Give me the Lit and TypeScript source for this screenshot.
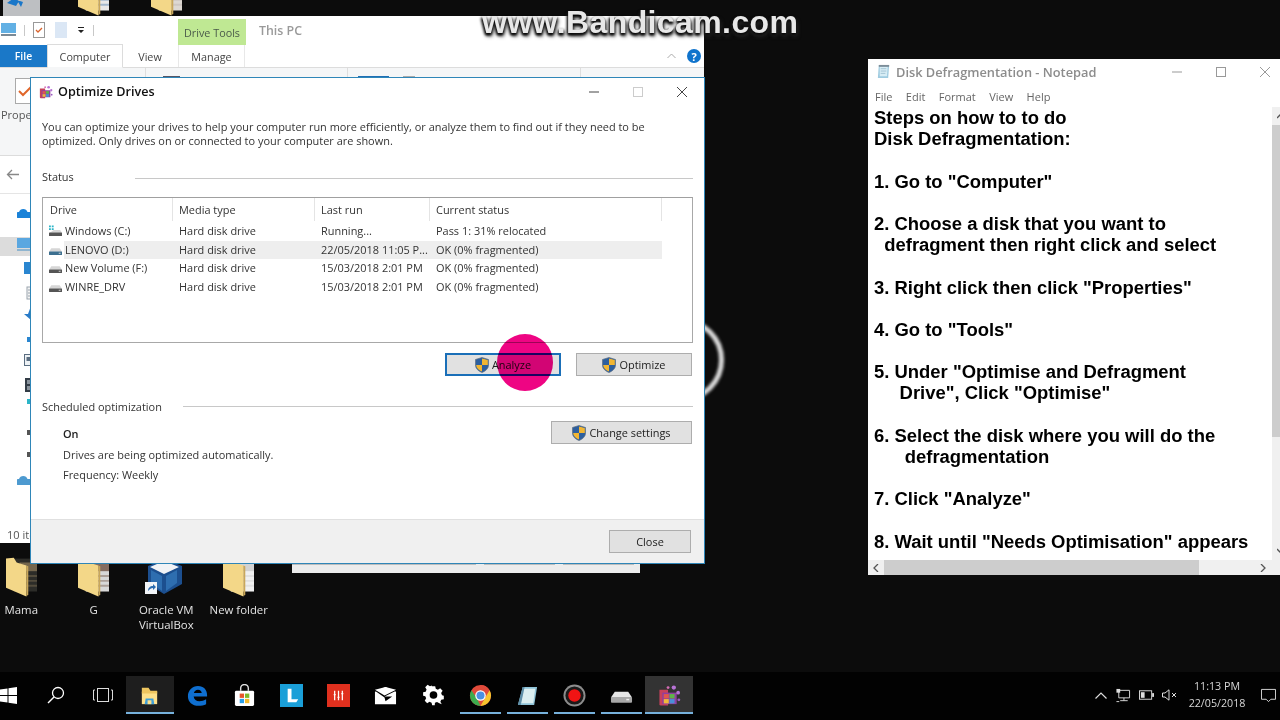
import { LitElement, html, css } from "lit";
import { customElement } from "lit/decorators.js";

const shield = html`<svg class="shield" viewBox="0 0 14 16"><path d="M7 .5 13.5 2.5V8c0 3.6-2.8 6-6.5 7.5C3.300 14 .5 11.600.5 8V2.500z" fill="#2d5f9e"/><path d="M7 1.500V8h5.800V3z" fill="#f2b632"/><path d="M7 8v6.500C4 13.200 1.200 11.200 1.200 8z" fill="#f2b632"/><path d="M7 .5 13.500 2.500V8c0 3.600-2.800 6-6.500 7.500C3.300 14 .5 11.600.5 8V2.500z" fill="none" stroke="#5f6f80" stroke-width=".7"/></svg>`;

const drive = (accent = "#555") => html`<svg class="drive" viewBox="0 0 14 12"><path d="M2.500 4h9L14 8H0z" fill="#d6d6d6"/><rect x="0" y="7.500" width="14" height="4" rx=".6" fill="${accent}"/><rect x="10.500" y="9" width="2" height="1" fill="#ddd"/></svg>`;

const sysDrive = html`<svg class="drive" viewBox="0 0 14 12"><path d="M0 0h2v2H0zM3 0h2v2H3zM0 3h2v2H0zM3 3h2v2H3z" fill="#2bb5c8"/><path d="M5 5h7l2 3H1z" fill="#d6d6d6"/><rect x="0" y="7.500" width="14" height="4" rx=".6" fill="#555"/></svg>`;

const defragIcon = html`<svg viewBox="0 0 16 16" width="100%" height="100%"><path d="M1 4h6v11H2a1 1 0 0 1-1-1z" fill="#c7415c"/><rect x="3" y="6" width="10" height="8" fill="#8f3fa0"/><rect x="4" y="7" width="3.500" height="3" fill="#e2574c"/><rect x="8" y="7" width="3.500" height="3" fill="#5fb548"/><rect x="4" y="10.500" width="3.500" height="3" fill="#f0b93a"/><rect x="8" y="10.500" width="3.500" height="3" fill="#4a8fd8"/><circle cx="11" cy="2.500" r="1.500" fill="#b873d6"/><circle cx="14" cy="6" r="1.300" fill="#b873d6"/><circle cx="14.500" cy="11" r="1" fill="#9a5cc0"/><circle cx="7" cy="2.500" r="1" fill="#d56cb4"/></svg>`;

const notepadIcon = html`<svg viewBox="0 0 16 16" width="100%" height="100%"><path d="M3 1h11l-1 14H2z" fill="#9fcbe0"/><path d="M4 3h8.500l-.8 10H4z" fill="#d8edf5"/><path d="M3 1h11v2H3z" fill="#7d8d98"/><path d="M5 5h6M5 7.500h6M5 10h5" stroke="#8ab0c4" stroke-width=".7"/></svg>`;

const folder = (paper: string, detail: string) => html`<svg class="folder" viewBox="0 0 32 40"><path d="M8 1h24v34H8z" fill="${paper}"/><path d="M14 5h18v9H14z" fill="${detail}" opacity=".75"/><path d="M18 18h14v2H18zM18 23h14v2H18zM19 28h13v2H19z" fill="${detail}" opacity=".4"/><path d="M0 1 8 0l3 5 10 3v32L0 31z" fill="#f3d788"/><path d="M21 8v32l2-2V9z" fill="#c9a75a"/></svg>`;

const vbox = html`<svg class="folder vb" viewBox="0 0 38 36"><path d="M19 0 37 7v18L19 35 3 25V7z" fill="#1c4f8f"/><path d="M19 2 34 8 19 15 5 8z" fill="#f1f3f6"/><path d="M6 11 17 17v15L6 24z" fill="#2e6eb0"/><path d="M32 11 21 17v15l11-8z" fill="#2e6eb0"/><rect x="0" y="23" width="12" height="12" fill="#f2f5f8"/><path d="M3 32c0-3 2-5 5-5v-2l3 3-3 3v-2c-2 0-3 1-5 3z" fill="#2b6cb0"/></svg>`;

const close = html`<svg class="cap" viewBox="0 0 10 10"><path d="M0 0 10 10M10 0 0 10" stroke="currentColor" fill="none" stroke-width="1"/></svg>`;
const minimize = html`<svg class="cap" viewBox="0 0 10 10"><path d="M0 5h10" stroke="currentColor" stroke-width="1"/></svg>`;
const maximize = html`<svg class="cap" viewBox="0 0 10 10"><rect x=".5" y=".5" width="9" height="9" fill="none" stroke="currentColor"/></svg>`;

const driveRows = [
  { icon: sysDrive, name: "Windows (C:)", run: "Running...", status: "Pass 1: 31% relocated", on: false },
  { icon: drive("#3c6f8f"), name: "LENOVO (D:)", run: "22/05/2018 11:05 P...", status: "OK (0% fragmented)", on: true },
  { icon: drive(), name: "New Volume (F:)", run: "15/03/2018 2:01 PM", status: "OK (0% fragmented)", on: false },
  { icon: drive(), name: "WINRE_DRV", run: "15/03/2018 2:01 PM", status: "OK (0% fragmented)", on: false },
];

const steps = [
  "Steps on how to to do",
  "Disk Defragmentation:",
  "",
  '1. Go to "Computer"',
  "",
  "2. Choose a disk that you want to",
  "  defragment then right click and select",
  "",
  '3. Right click then click "Properties"',
  "",
  '4. Go to "Tools"',
  "",
  '5. Under "Optimise and Defragment',
  '     Drive", Click "Optimise"',
  "",
  "6. Select the disk where you will do the",
  "      defragmentation",
  "",
  '7. Click "Analyze"',
  "",
  '8. Wait until "Needs Optimisation" appears',
];

/* nav pane slivers visible left of the dialog: row height, then the icon's colour */
const navRows = [
  { h: 17, c: "#1a82d8", k: "cloud" },
  { h: 31, c: "#5aa7e0", k: "pc" },
  { h: 23, c: "#2a86d0", k: "box" },
  { h: 25, c: "#9aa4ad", k: "doc" },
  { h: 20, c: "#2a7cc8", k: "arrow" },
  { h: 25, c: "#2a86d0", k: "dot" },
  { h: 22, c: "#5a6d80", k: "image" },
  { h: 25, c: "#333c46", k: "film" },
  { h: 15, c: "#2bb5c8", k: "dot" },
  { h: 31, c: "#555", k: "dot" },
  { h: 22, c: "#555", k: "dot" },
  { h: 28, c: "#4d9ad0", k: "cloud" },
];

const taskIcons = [
  html`<svg class="ti" viewBox="0 0 24 24"><path d="M4 8h16v13H4z" fill="#fde08a"/><path d="M4 4h7l2 3h7v3H4z" fill="#eec55f"/><path d="M8 15h8l1 6H7z" fill="#3f9fd8"/><rect x="10" y="17" width="4" height="4" fill="#fde08a"/></svg>`,
  html`<svg class="ti" viewBox="0 0 24 24"><path d="M22 13H8c.3 3.300 2.800 5 6 5 2.600 0 5-.7 7-2v5c-2.300 1.200-5 1.700-8 1.700-6.500 0-11-4-11-10C2 6.500 6.500 2 12.500 2 18.500 2 22 6 22 11.500zM8.200 9.500h8.200C16.300 7.500 14.800 6 12.500 6 10.300 6 8.700 7.500 8.200 9.500z" fill="#0f6fd0"/></svg>`,
  html`<svg class="ti" viewBox="0 0 24 24"><path d="M8 7V4.500a4 4 0 0 1 8 0V7" fill="none" stroke="#ddd" stroke-width="1.500"/><rect x="2" y="7" width="20" height="16" rx="1.500" fill="#fff"/><rect x="7" y="10" width="4.500" height="4.500" fill="#e8562a"/><rect x="12.500" y="10" width="4.500" height="4.500" fill="#7fba2a"/><rect x="7" y="15.500" width="4.500" height="4.500" fill="#2a9ee8"/><rect x="12.500" y="15.500" width="4.500" height="4.500" fill="#f5b92a"/></svg>`,
  html`<svg class="ti" viewBox="0 0 24 24"><rect width="24" height="24" fill="#1a9fd8"/><path d="M8 5h4v11h7l-2 3H8z" fill="#fff"/></svg>`,
  html`<svg class="ti" viewBox="0 0 24 24"><rect width="24" height="24" fill="#e0301e"/><path d="M8 7v10M12 7v10M16 7v10" stroke="#fff" stroke-width="1.300"/><path d="M7 11h2M11 14h2M15 10h2" stroke="#fff" stroke-width="1.300"/></svg>`,
  html`<svg class="ti" viewBox="0 0 24 24"><path d="M1 8 12 3l11 5v13H1z" fill="#fff"/><path d="M1 7h22l-12 6 8 0-7 5-1-4z" fill="#000" /><path d="M1 6 12 3l11 3-12 6z" fill="#fff"/></svg>`,
  html`<svg class="ti" viewBox="0 0 24 24"><path d="M10 2h4l.7 3 2.400 1 2.700-1.600 2.800 2.800L20.900 9.900l1 2.400 2.100.700v4l-3 .7-1 2.400 1.600 2.700-2.800-1-2.700-1.600-2.400 1L13.500 24h-3l-.7-3-2.400-1-2.700 1.600-2.800-2.800L3.500 16l-1-2.400L0 13V9l3-.7 1-2.400-1.600-2.700 2.800-2.800L7.900 2l2.400-1z" transform="scale(.9) translate(1.300 .6)" fill="#fff"/><circle cx="12" cy="11.500" r="4" fill="#000"/></svg>`,
  html`<svg class="ti" viewBox="0 0 24 24"><circle cx="12" cy="12" r="11" fill="#e04a3a"/><path d="M12 1a11 11 0 0 1 9.500 5.500H12z" fill="#e04a3a"/><path d="M21.500 6.500A11 11 0 0 1 12 23l5-9z" fill="#f7c52e"/><path d="M12 23A11 11 0 0 1 2.500 6.500l5.500 8z" fill="#3cab4e"/><circle cx="12" cy="12" r="5.500" fill="#fff"/><circle cx="12" cy="12" r="4.200" fill="#4a90e2"/></svg>`,
  html`<svg class="ti" viewBox="0 0 24 24"><path d="M7 3h15l-3 19H2z" fill="#8fc3d8"/><path d="M8 5h12l-2 15H5z" fill="#dbeef0"/><path d="M2 22 7 3l2 0-4 19z" fill="#5f8fa8"/></svg>`,
  html`<svg class="ti" viewBox="0 0 24 24"><circle cx="12" cy="12" r="11.500" fill="#8d8d8d"/><circle cx="12" cy="12" r="9.500" fill="#1a1a1a"/><circle cx="12" cy="12" r="6.500" fill="#f01414"/></svg>`,
  html`<svg class="ti" viewBox="0 0 24 24"><path d="M5 8h14l4 6H1z" fill="#e6e6e6"/><rect x="1" y="13.500" width="22" height="6" rx="1" fill="#a8a8a8"/><rect x="17" y="15.500" width="3" height="1.500" fill="#eee"/></svg>`,
  html`<span class="ti">${defragIcon}</span>`,
];

@customElement("app-root")
export class AppRoot extends LitElement {
  static styles = css`
    :host { display: block; width: 1280px; height: 720px; overflow: hidden; font-family: "Open Sans", "Noto Sans", sans-serif; }
    .screen { position: relative; width: 1280px; height: 720px; background: #0c0c0c; overflow: hidden; display: flex; flex-direction: column; }
    .desktop { position: relative; flex: 1; }

    .icons { position: absolute; left: -15px; display: flex; }
    .icons.top { top: -27px; }
    .icons.bottom { top: 554px; }
    .dicon { width: 72.500px; display: flex; flex-direction: column; align-items: center; color: #e4e4e4; font-size: 11.400px; line-height: 15px; text-align: center; }
    .folder { width: 31px; height: 40px; display: block; margin-top: 3px; margin-bottom: 5px; }
    .folder.vb { width: 38px; margin-left: -5px; }
    .binwrap { width: 37px; height: 40px; margin-top: 3px; margin-bottom: 5px; }

    .ring { position: absolute; left: 640px; top: 318px; width: 84px; height: 84px; box-sizing: border-box; border-radius: 50%; border: 5px solid #dcdcdc; filter: blur(1.500px); }

    /* explorer */
    .explorer { position: absolute; left: 0; top: 16px; width: 704px; height: 527px; background: #fff; display: flex; flex-direction: column; color: #333; font-size: 10.800px; }
    .qat { height: 29px; display: flex; align-items: flex-start; }
    .qat-left { display: flex; align-items: center; gap: 8px; height: 28px; width: 178px; padding-left: 1px; box-sizing: border-box; }
    .sep { width: 1px; height: 11px; background: #c8c8c8; }
    .drive-tools { width: 68px; height: 26px; margin-top: 3px; background: #bfe893; color: #4a5a4a; display: flex; align-items: center; justify-content: center; font-size: 10.800px; }
    .this-pc { margin-left: 13px; margin-top: 6px; color: #9a9a9a; font-weight: 600; font-size: 12.400px; }
    .tabs { height: 22px; display: flex; align-items: stretch; background: #fff; border-bottom: 1px solid #dcdcdc; position: relative; }
    .tab { display: flex; align-items: center; justify-content: center; color: #444; }
    .tab.file { width: 47px; background: #1a78c8; color: #fff; font-weight: 600; font-size: 10.400px; }
    .tab.cur { width: 76px; border: 1px solid #dcdcdc; border-bottom-color: #f5f6f7; margin-top: -1px; height: 24px; box-sizing: border-box; }
    .tab.view { width: 54px; }
    .tab.manage { width: 67px; margin-left: 1px; border-left: 1px solid #e8e8e8; border-right: 1px solid #e8e8e8; box-sizing: border-box; }
    .tabs-end { margin-left: auto; display: flex; align-items: center; gap: 11px; padding-right: 3px; }
    .help { width: 14px; height: 14px; border-radius: 50%; background: #0f73cc; color: #fff; font-size: 11px; font-weight: 700; display: flex; align-items: center; justify-content: center; }
    .ribbon { position: relative; height: 88px; background: #f5f6f7; border-bottom: 1px solid #dcdcdc; padding: 10px 0 0 15px; box-sizing: border-box; flex: none; }
    .ribsep { position: absolute; top: 0; height: 10px; width: 1px; background: #dedede; }
    .ribpeek { position: absolute; top: 8px; height: 2px; }
    .prop-box { width: 20px; height: 26px; border: 1px solid #aaa; background: #fff; box-sizing: border-box; display: flex; align-items: center; justify-content: center; }
    .prop-label { margin: 4px 0 0 -14px; line-height: 14px; color: #555; font-size: 11px; }
    .addr { height: 37px; border-bottom: 1px solid #e5e5e5; padding-left: 6px; display: flex; align-items: center; flex: none; }
    .nav { flex: 1; padding-top: 10px; padding-left: 17px; position: relative; }
    .navhl { position: absolute; left: 0; top: 43px; width: 30px; height: 19px; background: #dcdcdc; }
    .navrow { position: relative; display: flex; align-items: flex-end; }
    .navico { width: 14px; height: 14px; display: block; }
    .status { height: 18px; padding-left: 7px; display: flex; align-items: center; color: #555; flex: none; font-size: 11px; }

    .behind { position: absolute; left: 292px; top: 563px; width: 348px; height: 10px; background: #ececec; display: flex; gap: 8px; padding-right: 6px; box-sizing: border-box; }
    .behind i { display: block; width: 71px; height: 2px; background: #bdbdbd; }
    .behind i:first-child { flex: 1; }

    /* dialog */
    .dialog { position: absolute; left: 30px; top: 77px; width: 675px; height: 487px; box-sizing: border-box; background: #fff; border: 1px solid #2f86b8; display: flex; flex-direction: column; color: #333; font-size: 10.950px; line-height: 14px; }
    .dtitle { height: 27px; display: flex; align-items: center; padding-left: 8px; color: #111; flex: none; }
    .dtitle .ico { width: 14px; height: 14px; margin-right: 5px; }
    .dtitle b { font-size: 12.600px; font-weight: 600; }
    .dcaps { margin-left: auto; display: flex; align-items: center; color: #444; }
    .dcaps span { width: 44px; display: flex; justify-content: center; }
    .dcaps span.dim { color: #ccc; }
    .cap { width: 10px; height: 10px; display: block; }
    .dbody { padding: 0 11px; flex: 1; display: flex; flex-direction: column; }
    .desc { margin: 15px 0 0; }
    .legend { display: flex; align-items: center; height: 16px; white-space: nowrap; }
    .legend::after { content: ""; flex: 1; height: 1px; background: #c8c8c8; }
    .legend.status-l { margin-top: 21px; gap: 61px; }
    .legend.status-l::after { margin-top: 3px; }
    .legend.sched { margin-top: 23px; gap: 21px; }
    .legend.sched::after { margin-top: -2px; }
    .list { margin-top: 12px; height: 146px; box-sizing: border-box; border: 1px solid #a8a8a8; border-top-color: #a0a0a0; padding-left: 7px; flex: none; }
    .grow { display: grid; grid-template-columns: 129px 142px 115px 232px; align-items: center; }
    .ghead { height: 23px; }
    .ghead span { position: relative; height: 23px; display: flex; align-items: center; }
    .ghead span::after { content: ""; position: absolute; right: 6px; top: 0; bottom: 0; width: 1px; background: #e4e4e4; }
    .grows { margin-top: 1px; }
    .grow.row { height: 18.500px; margin-left: 14px; grid-template-columns: 115px 142px 115px 226px; width: 598px; }
    .grow.row.on { background: #eeeeee; }
    .cellname { display: flex; align-items: center; gap: 3px; margin-left: -15px; }
    .drive { width: 13px; height: 12px; flex: none; }
    .actions { display: flex; justify-content: flex-end; gap: 15px; margin-top: 10px; padding-right: 1px; }
    .btn { height: 23px; box-sizing: border-box; background: #e1e1e1; border: 1px solid #adadad; color: #222; display: flex; align-items: center; justify-content: center; gap: 3px; }
    .btn.b116 { width: 116px; }
    .btn.focus { border: 2px solid #1a6fb8; }
    .btn.cs { width: 141px; margin-top: -1px; }
    .btn.close { width: 82px; }
    .shield { width: 14px; height: 16px; display: block; }
    .schedrow { display: flex; justify-content: space-between; margin-top: 7px; padding-right: 1px; }
    .schedinfo { padding: 5px 0 0 21px; display: flex; flex-direction: column; gap: 6.500px; }
    .schedinfo b { font-weight: 600; color: #222; }
    .dfoot { height: 44px; flex: none; background: #f0f0f0; border-top: 1px solid #e0e0e0; box-sizing: border-box; display: flex; align-items: center; justify-content: flex-end; padding-right: 13px; }

    /* pink click marker */
    .click { position: absolute; left: 497px; top: 334px; width: 56px; height: 57px; border-radius: 50%; background: #ee0583; mix-blend-mode: multiply; }

    /* notepad */
    .notepad { position: absolute; left: 868px; top: 59px; width: 421px; height: 516px; background: #fff; display: flex; flex-direction: column; color: #000; }
    .ntitle { height: 27px; box-sizing: border-box; padding: 0 0 2px 8px; display: flex; align-items: center; color: #8c8c8c; font-size: 12.800px; font-weight: 600; flex: none; }
    .ntitle .ico { width: 15px; height: 15px; margin-right: 5px; }
    .ncaps { margin-left: auto; display: flex; color: #999; padding-right: 2px; }
    .ncaps span { width: 44px; display: flex; justify-content: center; }
    .nmenu { height: 21px; display: flex; align-items: center; gap: 13.400px; padding-left: 7px; color: #666; font-size: 11px; flex: none; }
    .nbody { flex: 1; display: flex; min-height: 0; }
    .ntext { flex: 1; padding-left: 6px; font-family: "Liberation Sans", Arial, sans-serif; font-weight: 700; font-size: 18.450px; line-height: 21.200px; white-space: pre; overflow: hidden; }
    .ntext div { height: 21.200px; }
    .vbar { width: 17px; background: #f0f0f0; display: flex; flex-direction: column; flex: none; }
    .varrow { height: 18px; display: flex; align-items: center; justify-content: center; flex: none; }
    .vthumb { height: 312px; background: #cdcdcd; flex: none; }
    .vrest { flex: 1; }
    .hbar { height: 15px; display: flex; background: #f0f0f0; flex: none; }
    .harrow { width: 16px; display: flex; align-items: center; justify-content: center; }
    .hthumb { width: 315px; background: #cdcdcd; }
    .hrest { width: 56px; }
    .arrowsvg { width: 8px; height: 8px; display: block; }

    .mark { position: absolute; left: 482px; top: 2px; font-family: "Liberation Sans", Arial, sans-serif; font-weight: 700; font-size: 32px; line-height: 40px; letter-spacing: .4px; white-space: nowrap; color: #e8e8e8; text-shadow: 0 2px 3px #000, 1px 3px 4px #333, -1px 2px 3px #222; }

    /* taskbar */
    .taskbar { height: 48px; background: #020202; display: flex; align-items: flex-start; padding-top: 4px; box-sizing: border-box; color: #ddd; flex: none; }
    .tb { width: 47.200px; height: 38px; display: flex; align-items: center; justify-content: center; position: relative; flex: none; }
    .tb.start { width: 32px; justify-content: flex-start; }
    .tb.search { width: 47px; }
    .tb.view { width: 47.400px; }
    .tb.active { background: #1e1e1e; }
    .tb.focus { background: #333; }
    .tb.run::after { content: ""; position: absolute; left: 3px; right: 3px; bottom: 0; height: 2px; background: #76b1dc; }
    .tb.active::after, .tb.focus::after { left: 0; right: 0; }
    .ti { width: 23px; height: 23px; display: block; }
    .tray { margin-left: auto; display: flex; align-items: center; height: 38px; }
    .tray svg { display: block; }
    .tray .t { margin-left: 8px; width: 14px; height: 14px; }
    .clock { width: 74px; margin-left: 3px; text-align: center; font-size: 10.700px; line-height: 17px; color: #d8d8d8; }
    .bell { width: 15px; height: 15px; margin: 0 4px 0 7px; }
  `;

  navIcon(r: { c: string; k: string }) {
    if (r.k === "cloud") return html`<svg class="navico" viewBox="0 0 14 14"><path d="M1 11a3 3 0 0 1 1-6 4.500 4.500 0 0 1 8.500 0H14v6z" fill="${r.c}"/></svg>`;
    if (r.k === "pc") return html`<svg class="navico" viewBox="0 0 14 14"><rect width="14" height="10" fill="${r.c}"/><rect y="11" width="14" height="2" fill="#8fb5d0"/></svg>`;
    if (r.k === "box") return html`<svg class="navico" viewBox="0 0 14 14"><path d="M7 1h7v12H7z" fill="${r.c}"/></svg>`;
    if (r.k === "dot") return html`<svg class="navico" viewBox="0 0 14 14"><rect x="10" y="6" width="4" height="5" fill="${r.c}"/></svg>`;
    if (r.k === "arrow") return html`<svg class="navico" viewBox="0 0 14 14"><path d="M14 0v14L7 8h4z" fill="${r.c}"/></svg>`;
    if (r.k === "image") return html`<svg class="navico" viewBox="0 0 14 14"><rect x="7.500" y="1.500" width="6.500" height="11" fill="#eef2f5" stroke="${r.c}"/><rect x="9.500" y="4" width="4.500" height="4" fill="${r.c}"/></svg>`;
    if (r.k === "film") return html`<svg class="navico" viewBox="0 0 14 14"><rect x="8" y="0" width="6" height="14" fill="${r.c}"/><rect x="10" y="2" width="4" height="4" fill="#8a939c"/><rect x="10" y="8" width="4" height="4" fill="#8a939c"/></svg>`;
    return html`<svg class="navico" viewBox="0 0 14 14"><rect x="10" y="1" width="4" height="12" fill="#f4f4f4" stroke="${r.c}"/><path d="M11 4h3M11 7h3M11 10h3" stroke="${r.c}"/></svg>`;
  }

  render() {
    return html`<div class="screen">
      <div class="desktop">
        <div class="icons top">
          <div class="dicon"><div class="binwrap"><svg width="37" height="40" viewBox="0 0 37 40"><path d="M0 0h37v40H0z" fill="#bdbfc2"/><path d="M4 27l7-5 5 3-3 5zM14 24l6 2-2 5z" fill="#1a77c9"/></svg></div></div>
          <div class="dicon">${folder("#e8e8e8", "#3a6ea5")}</div>
          <div class="dicon">${folder("#ddd8d2", "#b8b0aa")}</div>
        </div>
        <div class="icons bottom">
          <div class="dicon">${folder("#2c2c28", "#8c7a58")}<span>Mama</span></div>
          <div class="dicon">${folder("#d8d8d8", "#6a4a3a")}<span>G</span></div>
          <div class="dicon">${vbox}<span>Oracle VM<br />VirtualBox</span></div>
          <div class="dicon">${folder("#f0f0f0", "#c8c8c8")}<span>New folder</span></div>
        </div>

        <div class="ring"></div>

        <div class="behind"><i></i><i></i><i></i></div>

        <section class="explorer">
          <div class="qat">
            <div class="qat-left">
              <svg width="15" height="14" viewBox="0 0 15 14"><rect width="15" height="10" fill="#62b0e4"/><rect y="11" width="15" height="2" fill="#7a8a96"/></svg>
              <span class="sep"></span>
              <svg width="12" height="16" viewBox="0 0 12 16"><rect x=".5" y=".5" width="11" height="15" fill="#fff" stroke="#999"/><path d="M3 8l2 2 4-4" fill="none" stroke="#d9622b" stroke-width="1.300"/></svg>
              <svg width="12" height="16" viewBox="0 0 12 16" style="margin-left:2px"><rect width="12" height="16" fill="#dbe7f5"/></svg>
              <svg width="8" height="8" viewBox="0 0 8 8" style="margin-left:2px"><path d="M1 1h6v1H1zM1 4h6L4 7z" fill="#222"/></svg>
              <span class="sep"></span>
            </div>
            <div class="drive-tools">Drive Tools</div>
            <div class="this-pc">This PC</div>
          </div>
          <div class="tabs">
            <div class="tab file">File</div>
            <div class="tab cur">Computer</div>
            <div class="tab view">View</div>
            <div class="tab manage">Manage</div>
            <div class="tabs-end">
              <svg width="9" height="6" viewBox="0 0 9 6"><path d="M.5 5 4.500 1l4 4" fill="none" stroke="#aaa"/></svg>
              <span class="help">?</span>
            </div>
          </div>
          <div class="ribbon">
            <span class="ribsep" style="left:145px"></span>
            <span class="ribsep" style="left:347px"></span>
            <span class="ribsep" style="left:580px"></span>
            <span class="ribpeek" style="left:163px;width:17px;background:#556"></span>
            <span class="ribpeek" style="left:358px;width:31px;background:#1f6fb5"></span>
            <span class="ribpeek" style="left:403px;width:12px;background:#aaa"></span>
            <div class="prop-box"><svg width="14" height="12" viewBox="0 0 14 12"><path d="M1 6l4 4 8-8" fill="none" stroke="#e0662a" stroke-width="2"/></svg></div>
            <div class="prop-label">Prope</div>
          </div>
          <div class="addr">
            <svg width="13" height="11" viewBox="0 0 13 11"><path d="M13 5.500H2M6 1 1.500 5.500 6 10" fill="none" stroke="#888" stroke-width="1.300"/></svg>
          </div>
          <div class="nav">
            <div class="navhl"></div>
            ${navRows.map((r) => html`<div class="navrow" style="height:${r.h}px">${this.navIcon(r)}</div>`)}
          </div>
          <div class="status">10 items</div>
        </section>

        <section class="dialog">
          <div class="dtitle">
            <span class="ico">${defragIcon}</span>
            <b>Optimize Drives</b>
            <div class="dcaps">
              <span>${minimize}</span>
              <span class="dim">${maximize}</span>
              <span>${close}</span>
            </div>
          </div>
          <div class="dbody">
            <p class="desc">You can optimize your drives to help your computer run more efficiently, or analyze them to find out if they need to be<br />optimized. Only drives on or connected to your computer are shown.</p>
            <div class="legend status-l">Status</div>
            <div class="list">
              <div class="grow ghead">
                <span>Drive</span><span>Media type</span><span>Last run</span><span>Current status</span>
              </div>
              <div class="grows">
                ${driveRows.map((d) => html`<div class="grow row ${d.on ? "on" : ""}">
                  <div class="cellname">${d.icon}<span>${d.name}</span></div>
                  <div>Hard disk drive</div>
                  <div>${d.run}</div>
                  <div>${d.status}</div>
                </div>`)}
              </div>
            </div>
            <div class="actions">
              <div class="btn b116 focus">${shield}<span>Analyze</span></div>
              <div class="btn b116">${shield}<span>Optimize</span></div>
            </div>
            <div class="legend sched">Scheduled optimization</div>
            <div class="schedrow">
              <div class="schedinfo">
                <b>On</b>
                <span>Drives are being optimized automatically.</span>
                <span>Frequency: Weekly</span>
              </div>
              <div class="btn cs">${shield}<span>Change settings</span></div>
            </div>
          </div>
          <div class="dfoot"><div class="btn close">Close</div></div>
        </section>

        <div class="click"></div>

        <section class="notepad">
          <div class="ntitle">
            <span class="ico">${notepadIcon}</span>
            Disk Defragmentation - Notepad
            <div class="ncaps">
              <span>${minimize}</span><span>${maximize}</span><span>${close}</span>
            </div>
          </div>
          <div class="nmenu"><span>File</span><span>Edit</span><span>Format</span><span>View</span><span>Help</span></div>
          <div class="nbody">
            <div class="ntext">${steps.map((s) => html`<div>${s}</div>`)}</div>
            <div class="vbar">
              <div class="varrow"><svg class="arrowsvg" viewBox="0 0 8 8"><path d="M0 6 4 2l4 4" fill="none" stroke="#555" stroke-width="1.300"/></svg></div>
              <div class="vthumb"></div>
              <div class="vrest"></div>
              <div class="varrow"><svg class="arrowsvg" viewBox="0 0 8 8"><path d="M0 2l4 4 4-4" fill="none" stroke="#555" stroke-width="1.300"/></svg></div>
            </div>
          </div>
          <div class="hbar">
            <div class="harrow"><svg class="arrowsvg" viewBox="0 0 8 8"><path d="M6 0 2 4l4 4" fill="none" stroke="#555" stroke-width="1.300"/></svg></div>
            <div class="hthumb"></div>
            <div class="hrest"></div>
            <div class="harrow"><svg class="arrowsvg" viewBox="0 0 8 8"><path d="M2 0l4 4-4 4" fill="none" stroke="#555" stroke-width="1.300"/></svg></div>
          </div>
        </section>

        <div class="mark">www.Bandicam.com</div>
      </div>

      <footer class="taskbar">
        <div class="tb start"><svg width="17" height="17" viewBox="0 0 17 17"><path d="M0 2.500 7.500 1.400V8H0zM8.500 1.300 17 0v8H8.500zM0 9h7.500v6.600L0 14.500zM8.500 9H17v8l-8.500-1.300z" fill="#fff"/></svg></div>
        <div class="tb search"><svg width="18" height="18" viewBox="0 0 18 18"><circle cx="11" cy="7" r="5.500" fill="none" stroke="#fff" stroke-width="1.300"/><path d="M7 11 1 17" stroke="#fff" stroke-width="1.500"/></svg></div>
        <div class="tb view"><svg width="20" height="14" viewBox="0 0 20 14"><rect x="4.500" y=".5" width="11" height="13" fill="none" stroke="#ddd"/><path d="M2 2H.5v10H2M18 2h1.500v10H18" fill="none" stroke="#ddd"/></svg></div>
        ${taskIcons.map((ic, i) => html`<div class="tb ${i === 0 ? "active run" : ""} ${i === 11 ? "focus run" : ""} ${i >= 7 && i < 11 ? "run" : ""}">${ic}</div>`)}
        <div class="tray">
          <svg width="12" height="7" viewBox="0 0 12 7"><path d="M.5 6.500 6 1l5.500 5.500" fill="none" stroke="#ddd" stroke-width="1.200"/></svg>
          <svg class="t" viewBox="0 0 16 16" style="width:16px;height:15px"><path d="M3.500 2.500H15v8H3.500zM9 10.500v3M5 13.500h8M1 14.500h3" fill="none" stroke="#ddd"/><rect x="1" y="1" width="4" height="4" fill="#ddd"/></svg>
          <svg class="t" viewBox="0 0 16 10" style="width:15px;height:10px"><rect x=".5" y=".5" width="13" height="9" fill="none" stroke="#ddd"/><rect x="2" y="2" width="4" height="6" fill="#ddd"/><rect x="14" y="3" width="2" height="4" fill="#ddd"/></svg>
          <svg class="t" viewBox="0 0 15 12" style="width:15px;height:12px"><path d="M.5 4h2.500L7 .8v10.400L3 8H.5z" fill="none" stroke="#ddd"/><path d="M10 4l4 4M14 4l-4 4" stroke="#ddd"/></svg>
          <div class="clock">11:13 PM<br />22/05/2018</div>
          <svg class="bell" viewBox="0 0 16 16"><path d="M.5 1.500h15v10.500h-5L8 14.500 5.500 12h-5z" fill="none" stroke="#ddd"/></svg>
        </div>
      </footer>
    </div>`;
  }
}
